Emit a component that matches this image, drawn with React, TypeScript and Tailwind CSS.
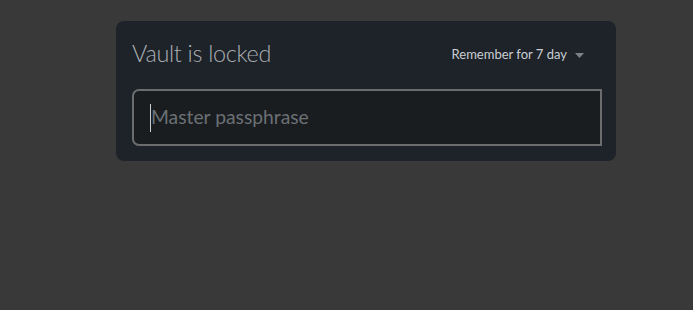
export default function App() {
  return (
    <div className="min-h-[310px] w-full bg-[#3a393a] pt-[21px] pl-[116px]" style={{ fontFamily: 'Lato, "Noto Sans", sans-serif' }}>
      <div className="w-[500px] rounded-lg bg-[#1e2329] pl-4 pr-[14px] pb-[15px]">
        <div className="flex h-[68px] items-center justify-between pb-[2px]">
          <h1 className="text-[23.4px] font-light text-[#a9aeb3] tracking-[-0.3px]">Vault is locked</h1>
          <button className="mr-[18px] mt-[2px] flex items-center gap-[8px] text-[13px] text-[#c9ced3]">
            Remember for 7 day
            <svg width="9" height="5" viewBox="0 0 9 5"><path d="M0 0h9L4.5 5z" fill="#7d8287" /></svg>
          </button>
        </div>
        <div className="flex h-[57px] items-center rounded-l-[7px] border-2 border-[#6a6c6e] bg-[#1a1d20] pl-[16px]">
          <span className="h-[28px] w-px bg-[#c9ced3]" />
          <span className="text-[19.3px] text-[#6b7075] -mt-[1px]">Master passphrase</span>
        </div>
      </div>
    </div>
  );
}
